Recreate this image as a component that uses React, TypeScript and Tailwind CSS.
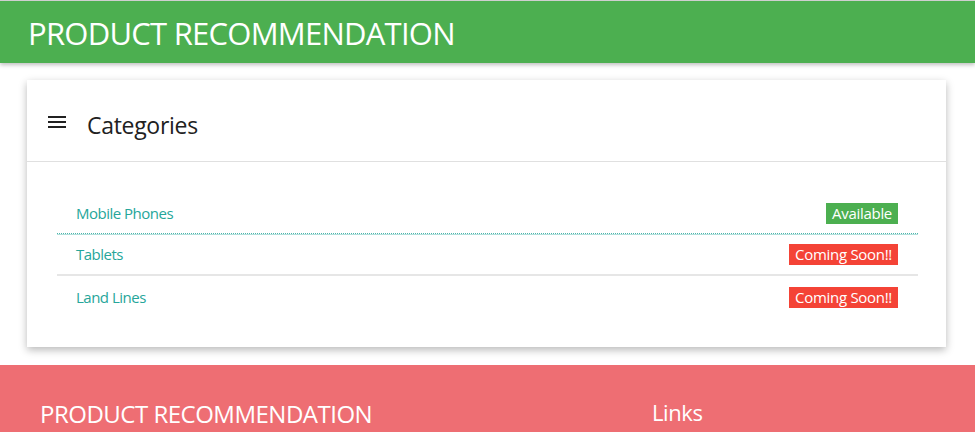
const font = { fontFamily: '"Open Sans", "Noto Sans", sans-serif' };

type Category = { name: string; available: boolean };

const categories: Category[] = [
  { name: "Mobile Phones", available: true },
  { name: "Tablets", available: false },
  { name: "Land Lines", available: false },
];

function MenuIcon() {
  return (
    <svg width="18" height="12" viewBox="0 0 18 12" className="shrink-0">
      <rect x="0" y="0" width="18" height="2" fill="#212121" />
      <rect x="0" y="5" width="18" height="2" fill="#212121" />
      <rect x="0" y="10" width="18" height="2" fill="#212121" />
    </svg>
  );
}

export default function App() {
  return (
    <div className="min-h-[432px] bg-white" style={font}>
      {/* top nav */}
      <header className="relative z-10 border-t border-[#cfcfcf] bg-[#4caf50] shadow-[0_2px_4px_rgba(0,0,0,0.25)]">
        <div className="flex h-[62px] items-center px-[28px] pt-[3px] text-[31px] tracking-[-0.75px] text-white">
          PRODUCT RECOMMENDATION
        </div>
      </header>

      <main className="px-[27px] pb-[18px] pt-[17px]">
        <div className="w-[919px] bg-white shadow-[0_3px_8px_rgba(0,0,0,0.28)]">
          <div className="flex h-[82px] items-center gap-[21px] border-b border-[#e0e0e0] pl-[21px] pt-[6px]">
            <div className="-mt-[4px]">
              <MenuIcon />
            </div>
            <h4 className="pt-[3px] text-[23px] tracking-[-0.3px] text-[#212121]">Categories</h4>
          </div>

          <ul className="mx-[30px] mr-[28px] pb-[29px] pt-[31px]">
            {categories.map((c, i) => (
              <li
                key={c.name}
                className={`flex items-center justify-between pl-[19px] pr-[20px] ${
                  i === 0
                    ? "h-[41px] border-b border-dotted border-[#4db6ac] shadow-[0_1px_0_#b2dfdb]"
                    : i === 1
                      ? "h-[42px] border-b-2 border-[#e6e6e6]"
                      : "h-[42px]"
                }`}
              >
                <span className="text-[15px] tracking-[-0.5px] text-[#26a69a]">{c.name}</span>
                <span
                  className={`px-[6px] text-[15px] leading-[21px] tracking-[-0.3px] text-white ${
                    c.available ? "bg-[#4caf50]" : "bg-[#f44336]"
                  }`}
                >
                  {c.available ? "Available" : "Coming Soon!!"}
                </span>
              </li>
            ))}
          </ul>
        </div>
      </main>

      <footer className="bg-[#ee6e73] pt-[31px] text-white">
        <div className="flex px-[40px]">
          <h5 className="w-[612px] text-[24px] tracking-[-0.5px]">PRODUCT RECOMMENDATION</h5>
          <h5 className="text-[22px] tracking-[-0.4px]">Links</h5>
        </div>
      </footer>
    </div>
  );
}
